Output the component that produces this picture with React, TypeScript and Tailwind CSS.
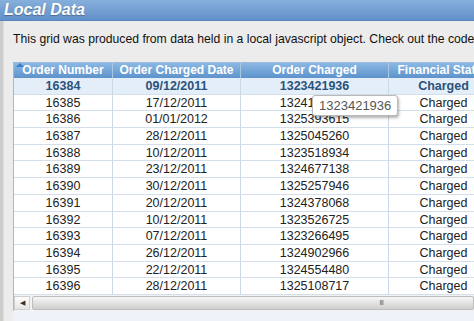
const rows = [
  ["16384", "09/12/2011", "1323421936", "Charged"],
  ["16385", "17/12/2011", "1324167936", "Charged"],
  ["16386", "01/01/2012", "1325393615", "Charged"],
  ["16387", "28/12/2011", "1325045260", "Charged"],
  ["16388", "10/12/2011", "1323518934", "Charged"],
  ["16389", "23/12/2011", "1324677138", "Charged"],
  ["16390", "30/12/2011", "1325257946", "Charged"],
  ["16391", "20/12/2011", "1324378068", "Charged"],
  ["16392", "10/12/2011", "1323526725", "Charged"],
  ["16393", "07/12/2011", "1323266495", "Charged"],
  ["16394", "26/12/2011", "1324902966", "Charged"],
  ["16395", "22/12/2011", "1324554480", "Charged"],
  ["16396", "28/12/2011", "1325108717", "Charged"],
]

const cols = [
  { label: "Order Number", w: "w-[99px]" },
  { label: "Order Charged Date", w: "w-[128px]" },
  { label: "Order Charged", w: "w-[148px]" },
  { label: "Financial Status", w: "w-[110px]" },
]

export default function App() {
  return (
    <div className="w-[474px] h-[321px] overflow-hidden bg-[#ececec] font-['Liberation_Sans',Arial,sans-serif] relative">
      <div className="h-[21px] bg-gradient-to-b from-[#86afdc] to-[#6190c9] border-b border-[#5a85bb] flex items-center pl-[4px]">
        <span className="text-white italic font-bold text-[16px] leading-none [text-shadow:0_1px_1px_rgba(0,0,0,0.3)]">
          Local Data
        </span>
      </div>
      <div className="flex h-[300px]">
        <div className="w-[4px] bg-[#cdcdcd] border-r border-[#dedede]" />
        <div className="flex-1 flex flex-col min-w-0">
          <p className="text-[12.2px] text-[#111] whitespace-nowrap pl-[9px] pt-[9px] h-[41px]">
            This grid was produced from data held in a local javascript object. Check out the code
          </p>
          <div className="ml-[9px] overflow-hidden border-l border-t border-[#9dbbd9] bg-white">
            <div className="flex h-[15px] bg-gradient-to-b from-[#8bb8e4] to-[#5d93cb] relative w-max">
              <span className="absolute left-[2px] top-0 w-0 h-0 border-l-[4px] border-r-[4px] border-b-[4px] border-l-transparent border-r-transparent border-b-[#3f7fc4]" />
              {cols.map((c) => (
                <div
                  key={c.label}
                  className={`${c.w} shrink-0 border-r border-[#a9c8e6] text-white font-bold text-[12px] leading-[15px] text-center whitespace-nowrap overflow-hidden`}
                >
                  {c.label}
                </div>
              ))}
            </div>
            {rows.map((r, i) => (
              <div
                key={r[0]}
                className={`flex h-[16.7px] w-max border-b border-[#d3dfea] ${i === 0 ? "bg-[#e4eef9] font-bold text-[#2b5279]" : "bg-white text-[#222]"}`}
              >
                {r.map((v, j) => (
                  <div
                    key={j}
                    className={`${cols[j].w} shrink-0 border-r border-[#c9d9e8] text-[12.5px] leading-[16px] text-center whitespace-nowrap`}
                  >
                    {v}
                  </div>
                ))}
              </div>
            ))}
            <div className="flex h-[16px] bg-[#f2f2f2] items-center">
              <div className="w-[16px] h-[14px] bg-gradient-to-b from-[#fdfdfd] to-[#e4e4e4] border border-[#cfcfcf] flex items-center justify-center text-[7px] text-[#333]">
                ◀
              </div>
              <div className="flex-1 h-[14px] ml-[2px] rounded-[2px] bg-gradient-to-b from-[#f7f7f7] via-[#e2e2e2] to-[#cfcfcf] border border-[#bdbdbd] flex items-center justify-end pr-[90px]">
                <span className="text-[8px] text-[#777] leading-none tracking-[-1px]">III</span>
              </div>
            </div>
          </div>
          <div className="flex-1 ml-[9px] bg-[#eef3fa]" />
        </div>
      </div>
      <div className="absolute left-[312px] top-[95px] px-[6px] h-[21px] flex items-center bg-white border border-[#b9b9b9] rounded-[3px] shadow-[1px_2px_3px_rgba(0,0,0,0.3)] text-[13px] text-[#555]">
        1323421936
      </div>
    </div>
  )
}
